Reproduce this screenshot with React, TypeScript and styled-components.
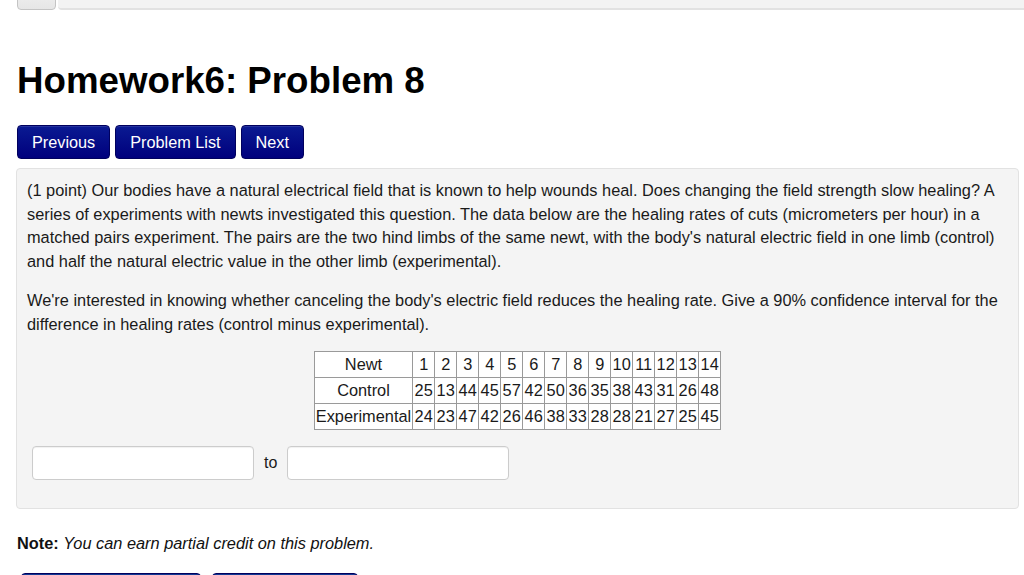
import React from "react";
import styled, { createGlobalStyle } from "styled-components";

const GlobalStyle = createGlobalStyle`
  html, body {
    margin: 0;
    padding: 0;
    background: #fff;
    overflow: hidden;
  }
  body {
    font-family: "Liberation Sans", Arial, sans-serif;
    color: #222;
  }
`;

const newts = [1, 2, 3, 4, 5, 6, 7, 8, 9, 10, 11, 12, 13, 14];
const control = [25, 13, 44, 45, 57, 42, 50, 36, 35, 38, 43, 31, 26, 48];
const experimental = [24, 23, 47, 42, 26, 46, 38, 33, 28, 28, 21, 27, 25, 45];

const App = () => {
  return (
    <>
      <GlobalStyle />
      <Page>
        <TopStrip>
          <ToggleButton />
          <TopBar />
        </TopStrip>
        <Content>
          <Title>Homework6: Problem 8</Title>
          <NavRow>
            <NavButton>Previous</NavButton>
            <NavButton>Problem List</NavButton>
            <NavButton>Next</NavButton>
          </NavRow>
          <ProblemBox>
            <Para>
              (1 point) Our bodies have a natural electrical field that is known
              to help wounds heal. Does changing the field strength slow healing?
              A series of experiments with newts investigated this question. The
              data below are the healing rates of cuts (micrometers per hour) in
              a matched pairs experiment. The pairs are the two hind limbs of the
              same newt, with the body's natural electric field in one limb
              (control) and half the natural electric value in the other limb
              (experimental).
            </Para>
            <Para>
              We're interested in knowing whether canceling the body's electric
              field reduces the healing rate. Give a 90% confidence interval for
              the difference in healing rates (control minus experimental).
            </Para>
            <DataTable>
              <tbody>
                <tr>
                  <LabelCell>Newt</LabelCell>
                  {newts.map((n) => (
                    <Cell key={n}>{n}</Cell>
                  ))}
                </tr>
                <tr>
                  <LabelCell>Control</LabelCell>
                  {control.map((n, i) => (
                    <Cell key={i}>{n}</Cell>
                  ))}
                </tr>
                <tr>
                  <LabelCell>Experimental</LabelCell>
                  {experimental.map((n, i) => (
                    <Cell key={i}>{n}</Cell>
                  ))}
                </tr>
              </tbody>
            </DataTable>
            <AnswerRow>
              <AnswerInput type="text" />
              <ToLabel>to</ToLabel>
              <AnswerInput type="text" />
            </AnswerRow>
          </ProblemBox>
          <Note>
            <b>Note:</b> <i>You can earn partial credit on this problem.</i>
          </Note>
          <BottomRow>
            <BottomButton $width={180} />
            <BottomButton $width={146} />
          </BottomRow>
        </Content>
      </Page>
    </>
  );
};

export default App;

const Page = styled.div`
  width: 1024px;
  height: 575px;
  overflow: hidden;
`;

const TopStrip = styled.div`
  display: flex;
  align-items: flex-end;
  height: 10px;
  overflow: hidden;
  padding-left: 17px;
  gap: 2px;
`;

const ToggleButton = styled.div`
  width: 39px;
  height: 30px;
  flex-shrink: 0;
  box-sizing: border-box;
  border: 1px solid #c4c4c4;
  border-radius: 4px;
  background: linear-gradient(#f6f6f6, #e6e6e6);
`;

const TopBar = styled.div`
  flex: 1;
  height: 30px;
  background: #f3f3f3;
  border-bottom: 2px solid #e2e2e2;
  border-bottom-left-radius: 4px;
`;

const Content = styled.div`
  padding: 0 5px 0 16px;
`;

const Title = styled.h1`
  margin: 51px 0 0 1px;
  font-size: 36.7px;
  line-height: 40px;
  font-weight: 700;
  color: #000;
`;

const NavRow = styled.div`
  display: flex;
  gap: 5px;
  margin: 24px 0 0 1px;
`;

const NavButton = styled.button`
  height: 34px;
  padding: 0 14px;
  font-family: "Liberation Sans", Arial, sans-serif;
  font-size: 16.25px;
  color: #fff;
  border: 1px solid #00005e;
  border-radius: 4px;
  background: linear-gradient(#0a1a92, #00007d);
  box-shadow: inset 0 1px 0 rgba(255, 255, 255, 0.12);
  cursor: pointer;
`;

const ProblemBox = styled.div`
  margin-top: 9px;
  padding: 10px 10px 28px 10px;
  background: #f4f4f4;
  border: 1px solid #e2e2e2;
  border-radius: 4px;
`;

const Para = styled.p`
  margin: 0 0 15px 0;
  font-size: 16.35px;
  line-height: 23.7px;
  color: #1a1a1a;
`;

const DataTable = styled.table`
  margin: 11px auto 0 auto;
  border-collapse: collapse;
  border: 1px solid #8a8a8a;
  background: #fff;
  font-size: 16.35px;
  color: #1a1a1a;
`;

const Cell = styled.td`
  border: 1px solid #9a9a9a;
  padding: 3px 0.5px 3px 0.5px;
  text-align: center;
  min-width: 20px;
`;

const LabelCell = styled(Cell)`
  padding: 3px 1px 3px 1px;
`;

const AnswerRow = styled.div`
  display: flex;
  align-items: center;
  margin: 16px 0 0 5px;
`;

const AnswerInput = styled.input`
  width: 222px;
  height: 34px;
  box-sizing: border-box;
  border: 1px solid #cccccc;
  border-radius: 4px;
  background: #fff;
  box-shadow: inset 0 1px 1px rgba(0, 0, 0, 0.06);
`;

const ToLabel = styled.span`
  font-size: 16px;
  color: #1a1a1a;
  margin: 0 10px;
`;

const Note = styled.p`
  margin: 23px 0 0 1px;
  font-size: 16.35px;
  line-height: 22px;
  color: #111;
`;

const BottomRow = styled.div`
  display: flex;
  gap: 11px;
  margin: 19px 0 0 5px;
`;

const BottomButton = styled.div<{ $width: number }>`
  width: ${(p) => p.$width}px;
  height: 34px;
  box-sizing: border-box;
  border-radius: 4px;
  border: 1px solid #00005e;
  background: linear-gradient(#123a94, #00007d);
`;
